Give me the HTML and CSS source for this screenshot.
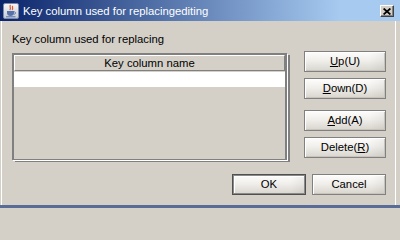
FILE: index.html
```html
<!DOCTYPE html>
<html>
<head>
<meta charset="utf-8">
<title>Key column used for replacingediting</title>
<link rel="stylesheet" href="styles.css">
</head>
<body>
<div class="window">
  <div class="titlebar">
    <svg class="app-icon" viewBox="0 0 16 16" width="16" height="16">
      <defs>
        <linearGradient id="ibg" x1="0" y1="0" x2="0" y2="1">
          <stop offset="0" stop-color="#f6f6f6"/>
          <stop offset="1" stop-color="#c4cad6"/>
        </linearGradient>
      </defs>
      <rect x="0.5" y="0.5" width="15" height="15" rx="1.5" fill="url(#ibg)" stroke="#7d8aa8"/>
      <path d="M7.5 2 C5.8 3.8 8.8 4.8 6.8 7 M9.8 3 C8.6 4.4 10.6 5.2 9.2 7" fill="none" stroke="#e0582a" stroke-width="1.2"/>
      <path d="M4 8 H11 V10 C11 12 9.5 13 7.5 13 C5.5 13 4 12 4 10 Z" fill="#5573a8"/>
      <path d="M11 8.8 C13.2 8.8 13.2 11.2 10.8 11.2" fill="none" stroke="#5573a8" stroke-width="1"/>
      <path d="M3 13.8 H12.5" stroke="#5573a8" stroke-width="1"/>
    </svg>
    <span class="title">Key column used for replacingediting</span>
    <div class="close-btn">
      <svg viewBox="0 0 8 7" width="8" height="7"><path d="M0.6 0.5 L7.4 6.5 M7.4 0.5 L0.6 6.5" stroke="#000" stroke-width="1.7" fill="none"/></svg>
    </div>
  </div>
  <div class="client">
    <div class="label">Key column used for replacing</div>
    <div class="main">
      <div class="pane">
        <div class="header">Key column name</div>
        <div class="row"></div>
      </div>
      <div class="side-buttons">
        <div class="btn"><u>U</u>p(U)</div>
        <div class="btn"><u>D</u>own(D)</div>
        <div class="btn group-start"><u>A</u>dd(A)</div>
        <div class="btn">Delete(<u>R</u>)</div>
      </div>
    </div>
    <div class="footer">
      <div class="btn small default">OK</div>
      <div class="btn small">Cancel</div>
    </div>
  </div>
  <div class="bottom-band"></div>
</div>
</body>
</html>
```

FILE: styles.css
```css
html, body {
  margin: 0;
  padding: 0;
}

body {
  width: 400px;
  height: 208px;
  overflow: hidden;
  background: #d4d0c8;
  font-family: "Liberation Sans", Arial, sans-serif;
  font-size: 11.3px;
  color: #000;
}

.window {
  display: flex;
  flex-direction: column;
  height: 208px;
}

.titlebar {
  flex: none;
  height: 21px;
  display: flex;
  align-items: center;
  background: linear-gradient(to right, #0a246a 0%, #a6caf0 85%);
  color: #fff;
}

.app-icon {
  flex: none;
  margin-left: 3px;
}

.title {
  margin-left: 4px;
  padding-top: 2px;
  line-height: 19px;
  white-space: nowrap;
}

.close-btn {
  flex: none;
  box-sizing: border-box;
  align-self: flex-start;
  margin-top: 5px;
  margin-left: auto;
  margin-right: 6px;
  width: 14px;
  height: 12px;
  background: #d4d0c8;
  border-top: 1px solid #fff;
  border-left: 1px solid #fff;
  border-right: 1px solid #404040;
  border-bottom: 1px solid #404040;
  box-shadow: inset -1px -1px 0 #808080;
  display: flex;
  align-items: center;
  justify-content: center;
}

.close-btn svg {
  display: block;
}

.client {
  flex: 1;
  margin-left: 1px;
  margin-right: 4px;
  border-left: 1px solid #fff;
  border-right: 1px solid #fff;
  padding: 11px 9px 0 10px;
  display: flex;
  flex-direction: column;
}

.label {
  line-height: 14px;
  margin-bottom: 5px;
  white-space: nowrap;
}

.main {
  display: flex;
  justify-content: space-between;
  align-items: flex-start;
}

.pane {
  box-sizing: border-box;
  margin-top: 2px;
  width: 275px;
  height: 107px;
  border-top: 2px solid #808080;
  border-left: 2px solid #808080;
  border-right: 2px solid #808080;
  border-bottom: 1px solid #808080;
  box-shadow: 1px 1px 0 #fff, 3px 2px 0 #808080;
  background: #d4d0c8;
}

.header {
  box-sizing: border-box;
  height: 16px;
  border-top: 1px solid #fff;
  border-left: 1px solid #fff;
  border-bottom: 1px solid #808080;
  border-right: 1px solid #808080;
  line-height: 15px;
  text-align: center;
  white-space: nowrap;
}

.row {
  margin-top: 1px;
  height: 15px;
  background: #fff;
}

.side-buttons {
  display: flex;
  flex-direction: column;
  gap: 6px;
}

.side-buttons .group-start {
  margin-top: 5px;
}

.btn {
  box-sizing: border-box;
  width: 82px;
  height: 21px;
  padding-bottom: 1px;
  display: flex;
  align-items: center;
  justify-content: center;
  white-space: nowrap;
  border: 1px solid #808080;
  background:
    linear-gradient(to right, rgba(0,0,0,0) 80%, rgba(0,0,0,0.05)),
    linear-gradient(to bottom, #fdfdfc 0%, #f1efeb 45%, #d8d5ce 100%);
  box-shadow: inset 1px 1px 0 #fff, inset -1px -1px 0 #c8c4bc;
}

.btn u {
  text-underline-offset: 1px;
}

.footer {
  margin-top: 14px;
  display: flex;
  justify-content: flex-end;
  gap: 6px;
}

.btn.small {
  width: 74px;
}

.btn.default {
  border: 1px solid #505050;
  box-shadow: inset 0 0 0 1px #8a8a8a, inset 2px 2px 0 #fff;
}

.bottom-band {
  flex: none;
  height: 3px;
  background: #5a6b97;
}
```
